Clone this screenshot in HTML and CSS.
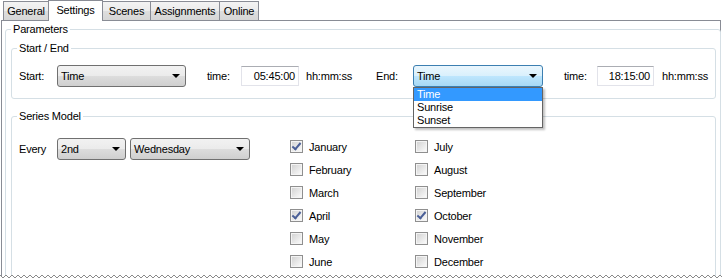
FILE: index.html
```html
<!DOCTYPE html>
<html lang="en">

<head>
    <meta charset="UTF-8">
    <meta name="viewport" content="width=device-width, initial-scale=1.0">
    <title>Settings</title>
    <link rel="stylesheet" href="styles.css">
</head>

<body>

    <div class="window">
        <!-- tabs -->
        <div class="tabs">
            <div class="tab first">General</div>
            <div class="tab active">Settings</div>
            <div class="tab">Scenes</div>
            <div class="tab">Assignments</div>
            <div class="tab">Online</div>
        </div>

        <div class="panel">
            <fieldset class="group params">
                <legend>Parameters</legend>

                <!-- start / end -->
                <fieldset class="group inner start_end">
                    <legend>Start / End</legend>
                    <div class="row">
                        <span class="lbl start_lbl">Start:</span>
                        <div class="combo w_start"><span>Time</span><i class="arrow"></i></div>
                        <span class="lbl time_lbl">time:</span>
                        <div class="textbox">05:45:00</div>
                        <span class="lbl unit">hh:mm:ss</span>
                        <span class="lbl end_lbl">End:</span>
                        <div class="combo_wrap">
                            <div class="combo focused w_end"><span>Time</span><i class="arrow"></i></div>
                            <ul class="droplist">
                                <li class="sel">Time</li>
                                <li>Sunrise</li>
                                <li>Sunset</li>
                            </ul>
                        </div>
                        <span class="lbl time_lbl2">time:</span>
                        <div class="textbox tb2">18:15:00</div>
                        <span class="lbl unit2">hh:mm:ss</span>
                    </div>
                </fieldset>

                <!-- series model -->
                <fieldset class="group inner series">
                    <legend>Series Model</legend>
                    <div class="series_row">
                        <div class="every">
                            <span class="lbl every_lbl">Every</span>
                            <div class="combo w_nth"><span>2nd</span><i class="arrow"></i></div>
                            <div class="combo w_day"><span>Wednesday</span><i class="arrow"></i></div>
                        </div>
                        <div class="months">
                            <label class="chk on"><i class="box"></i>January</label>
                            <label class="chk"><i class="box"></i>February</label>
                            <label class="chk"><i class="box"></i>March</label>
                            <label class="chk on"><i class="box"></i>April</label>
                            <label class="chk"><i class="box"></i>May</label>
                            <label class="chk"><i class="box"></i>June</label>
                            <label class="chk"><i class="box"></i>July</label>
                            <label class="chk"><i class="box"></i>August</label>
                            <label class="chk"><i class="box"></i>September</label>
                            <label class="chk on"><i class="box"></i>October</label>
                            <label class="chk"><i class="box"></i>November</label>
                            <label class="chk"><i class="box"></i>December</label>
                        </div>
                    </div>
                </fieldset>
            </fieldset>
        </div>

        <!-- torn bottom edge -->
        <svg class="torn" width="722" height="7" viewBox="0 0 722 7">
            <defs>
                <pattern id="zig" width="6" height="7" patternUnits="userSpaceOnUse">
                    <path d="M0 2 L3 5 L6 2 L6 7 L0 7 Z" fill="#ffffff" />
                    <path d="M0 2 L3 5 L6 2" fill="none" stroke="#8a8a8a" stroke-width="1" />
                </pattern>
            </defs>
            <rect x="0" y="0" width="722" height="7" fill="url(#zig)" />
        </svg>
    </div>

</body>

</html>
```

FILE: styles.css
```css
* {
    margin: 0;
    padding: 0;
    box-sizing: border-box;
}

body {
    background: #ffffff;
    font-family: "Liberation Sans", Arial, sans-serif;
    font-size: 11px;
    letter-spacing: -0.2px;
    color: #000000;
}

li {
    list-style: none;
}

.window {
    width: 722px;
    height: 280px;
    overflow: hidden;
    position: relative;
}

/* tabs */
.tabs {
    display: flex;
    align-items: flex-end;
    height: 21px;
    padding-left: 3px;
    position: relative;
    z-index: 2;
}

.tab {
    height: 19px;
    margin-bottom: 1px;
    margin-left: -1px;
    border: 1px solid #898c95;
    border-bottom: none;
    background: linear-gradient(#f3f3f3, #ebebeb 50%, #dedede 50%, #d6d6d6);
    display: flex;
    align-items: center;
    justify-content: center;
    padding-bottom: 1px;
}

.tab.first {
    margin-left: 0;
    width: 46px;
}

.tab:nth-child(3) {
    width: 49px;
}

.tab:nth-child(4) {
    width: 70px;
}

.tab:nth-child(5) {
    width: 40px;
}

.tab.active {
    width: 55px;
    height: 21px;
    margin-bottom: 0;
    background: #ffffff;
    position: relative;
    z-index: 3;
    padding-bottom: 3px;
}

.panel {
    margin-top: -1px;
    margin-left: 1px;
    width: 720px;
    height: 300px;
    border: 1px solid #898c95;
    background: #ffffff;
    padding: 0 1px 0 3px;
    position: relative;
    z-index: 1;
}

/* group boxes */
.group {
    border: 1px solid #d5dfe5;
    border-radius: 3px;
}

.group legend {
    padding: 0 2px;
    line-height: 13px;
    height: 13px;
}

.params {
    margin-top: 2px;
    padding: 6px 4px 0 5px;
    height: 280px;
}

.inner legend {
    margin-left: -2px;
}

.start_end {
    padding: 10px 7px 11px 7px;
}

.series {
    margin-top: 11px;
    padding: 12px 7px 0 7px;
    height: 200px;
}

.row {
    display: flex;
    align-items: center;
    height: 22px;
}

.lbl {
    white-space: nowrap;
    flex: none;
}

/* combo boxes */
.combo {
    flex: none;
    height: 22px;
    border: 1px solid #707070;
    border-radius: 3px;
    background: linear-gradient(#f2f2f2, #ebebeb 50%, #dddddd 50%, #cfcfcf);
    display: flex;
    align-items: center;
    justify-content: space-between;
    padding: 0 5px 0 3px;
}

.combo.focused {
    border-color: #3c7fb1;
    background: linear-gradient(#eaf6fd, #d9f0fc 50%, #bee6fd 50%, #a7d9f5);
}

.arrow {
    width: 0;
    height: 0;
    border-left: 4px solid transparent;
    border-right: 4px solid transparent;
    border-top: 4px solid #000000;
}

.start_lbl {
    width: 38px;
}

.w_start {
    width: 129px;
}

.w_end {
    width: 130px;
}

.every_lbl {
    width: 38px;
}

.w_nth {
    width: 69px;
}

.w_day {
    width: 120px;
    margin-left: 4px;
}

.combo_wrap {
    position: relative;
    flex: none;
}

.droplist {
    position: absolute;
    left: 0;
    top: 22px;
    width: 130px;
    background: #ffffff;
    border: 1px solid #646464;
    box-shadow: 2px 2px 2px rgba(0, 0, 0, 0.25);
    z-index: 5;
}

.droplist li {
    height: 13px;
    line-height: 13px;
    padding-left: 3px;
}

.droplist li.sel {
    background: #3399ff;
    color: #ffffff;
}

/* text boxes */
.textbox {
    flex: none;
    width: 58px;
    height: 20px;
    border: 1px solid #e2e3ea;
    border-top-color: #abadb3;
    text-align: right;
    padding-right: 3px;
    line-height: 18px;
}

.textbox.tb2 {
    width: 57px;
}

.time_lbl {
    margin-left: 21px;
    width: 34px;
}

.time_lbl2 {
    margin-left: 21px;
    width: 33px;
}

.unit {
    margin-left: 7px;
    width: 70px;
}

.unit2 {
    margin-left: 8px;
}

.end_lbl {
    width: 37px;
}

/* series model */
.series_row {
    display: flex;
}

.every {
    display: flex;
    align-items: center;
    height: 22px;
    margin-top: 3px;
}

.months {
    margin-left: 40px;
    display: grid;
    grid-template-columns: 125px 125px;
    grid-template-rows: repeat(6, 23px);
    grid-auto-flow: column;
}

.chk {
    display: flex;
    align-items: center;
}

.chk .box {
    width: 13px;
    height: 13px;
    border: 1px solid #8f8f8f;
    background: linear-gradient(135deg, #d0d0d0, #f4f4f4 80%, #ffffff);
    box-shadow: inset 0 0 0 1px #f4f4f4;
    margin-right: 6px;
    position: relative;
}

.chk.on .box::after {
    content: "";
    position: absolute;
    left: 3px;
    top: 0px;
    width: 3px;
    height: 7px;
    border: solid #4a5f97;
    border-width: 0 2px 2px 0;
    transform: rotate(40deg);
}

.torn {
    position: absolute;
    left: 0;
    bottom: 0;
    z-index: 10;
}
```
